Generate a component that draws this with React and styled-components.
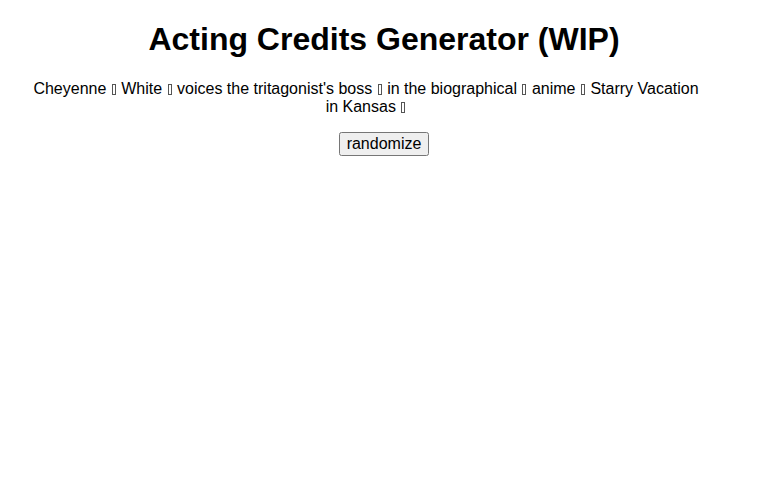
import React, { useState } from "react";
import styled, { createGlobalStyle } from "styled-components";

const Global = createGlobalStyle`
  body {
    margin: 8px;
    font-family: "Liberation Sans", Arial, sans-serif;
    color: #000;
    background: #fff;
  }
`;

const Page = styled.main`
  display: flex;
  flex-direction: column;
  align-items: center;
  text-align: center;
`;

const Title = styled.h1`
  font-size: 32px;
  font-weight: bold;
  margin: 13px 0 22px;
`;

const Credit = styled.p`
  font-size: 16px;
  line-height: 18px;
  margin: 0 36px 0 0;
  max-width: 680px;
`;

/* missing-glyph box that stands between the credit's words */
const Glyph = styled.span`
  display: inline-block;
  box-sizing: border-box;
  width: 4px;
  height: 11px;
  margin: 0 1px;
  border: 1px solid #555;
  vertical-align: -1px;
`;

const Button = styled.button`
  font-family: "Liberation Sans", Arial, sans-serif;
  font-size: 16px;
  margin-top: 16px;
  padding: 1px 6px;
`;

const credits = [
  ["Cheyenne", "White", "voices the tritagonist's boss", "in the biographical", "anime", "Starry Vacation in Kansas"],
];

export default function App() {
  const [idx, setIdx] = useState(0);
  return (
    <>
      <Global />
      <Page>
        <Title>Acting Credits Generator (WIP)</Title>
        <Credit>
          {credits[idx].map((part, i) => (
            <React.Fragment key={i}>
              {i > 0 && " "}
              {part} <Glyph />
            </React.Fragment>
          ))}
        </Credit>
        <Button onClick={() => setIdx((idx + 1) % credits.length)}>randomize</Button>
      </Page>
    </>
  );
}
